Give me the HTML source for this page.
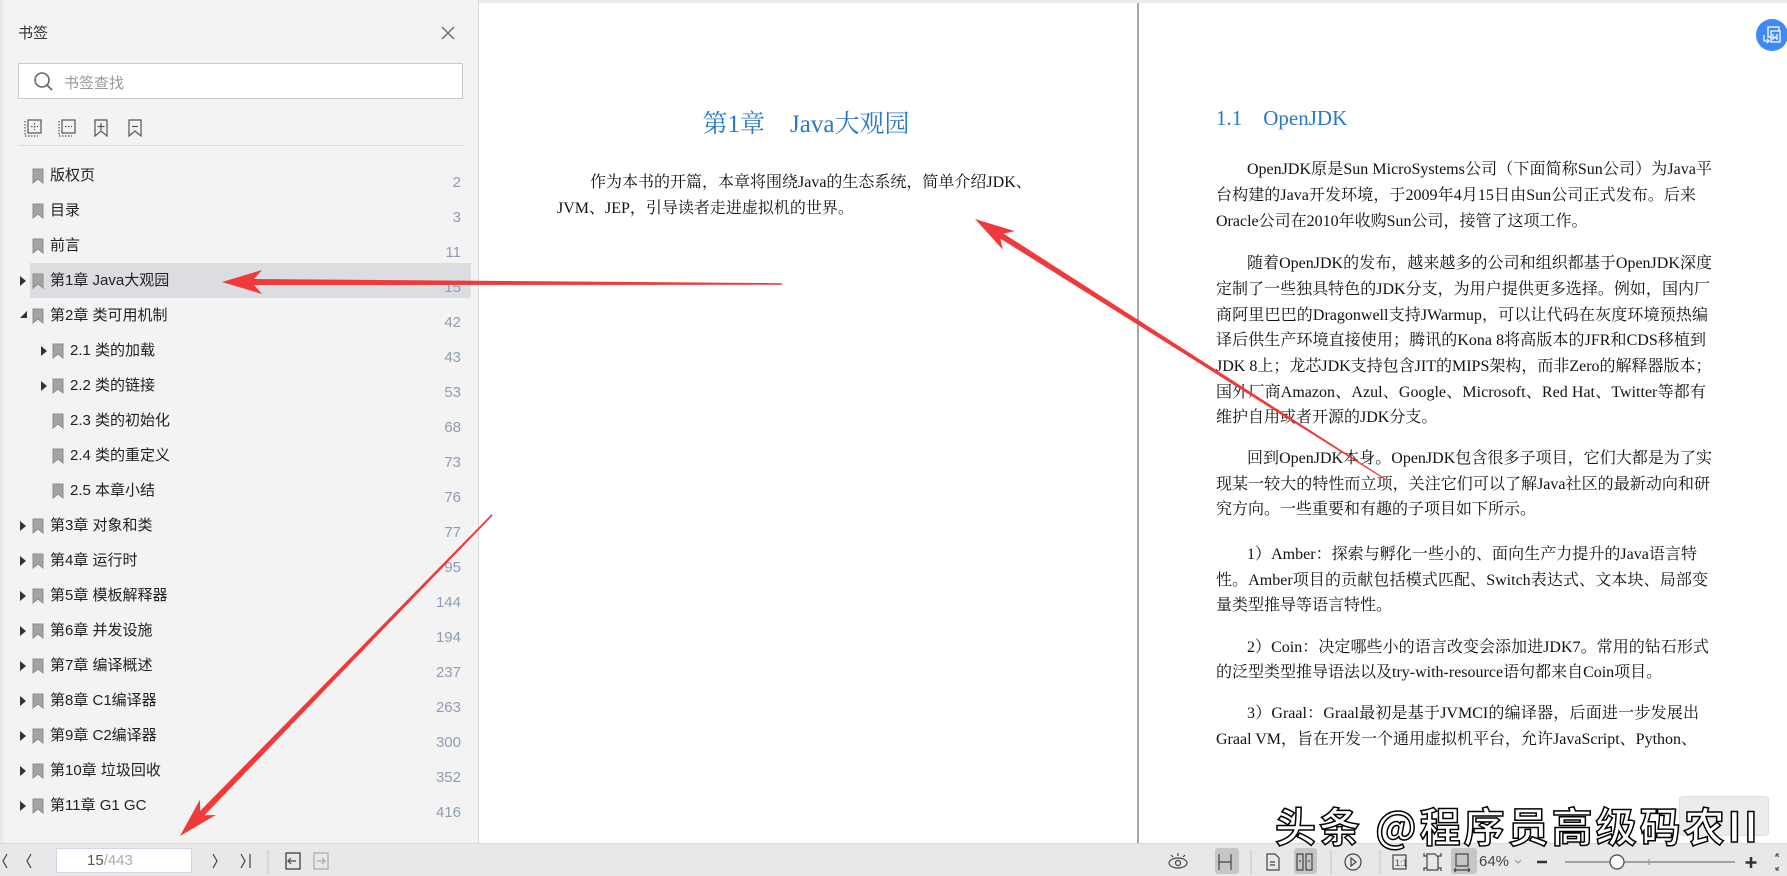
<!DOCTYPE html>
<html><head><meta charset="utf-8"><style>
*{margin:0;padding:0;box-sizing:border-box}
body{width:1787px;height:876px;overflow:hidden;background:#fff;position:relative;font-family:"Liberation Sans","Noto Sans CJK SC",sans-serif}
.abs{position:absolute}
#side{left:0;top:0;width:479px;height:843px;background:#f3f3f3;border-right:1px solid #d6d6d6;border-left:3px solid #e9e9e9}
.row{position:absolute;left:0;width:475px;height:35px;font-size:15px;color:#222;line-height:35px}
.row .t{position:absolute;top:1px}
.row .n{position:absolute;right:14px;top:8px;color:#8d9db3;font-size:15px;font-family:"Liberation Sans",sans-serif}
.row svg.bm{position:absolute;top:11px}
.tri{position:absolute;top:14px;width:0;height:0;border-top:5px solid transparent;border-bottom:5px solid transparent;border-left:6px solid #333}
.pg{font-family:"Liberation Serif","Noto Serif CJK SC",serif;font-size:16px;color:#111;position:absolute;white-space:nowrap}
.j{text-align:justify;text-align-last:justify}
#tb{left:0;top:843px;width:1787px;height:33px;background:#e8e8e8;border-top:1px solid #d8d8d8}
</style></head><body>
<div class="abs" style="left:0;top:0;width:1787px;height:3px;background:#ececec"></div>
<div id="side" class="abs"></div>
<div class="abs" style="left:18px;top:22px;font-size:15px;color:#333">书签</div>
<svg class="abs" style="left:440px;top:25px" width="16" height="16"><path d="M2 2L14 14M14 2L2 14" stroke="#666" stroke-width="1.3"/></svg>
<div class="abs" style="left:18px;top:63px;width:445px;height:36px;background:#fff;border:1px solid #c9c9c9"></div>
<svg class="abs" style="left:33px;top:71px" width="22" height="22"><circle cx="9" cy="9" r="7" fill="none" stroke="#666" stroke-width="1.6"/><path d="M14 14L19 19" stroke="#666" stroke-width="1.8"/></svg>
<div class="abs" style="left:64px;top:72px;font-size:15px;color:#999">书签查找</div>
<svg class="abs" style="left:24px;top:118px" width="140" height="20" fill="none" stroke="#555" stroke-width="1.2">
<rect x="4" y="2" width="13" height="13"/><path d="M10.5 5v7M7 8.5h7M1 3v15h13" stroke-dasharray="1.5 1.5"/>
<rect x="38" y="2" width="13" height="13"/><path d="M41 8.5h7M35 3v15h13" stroke-dasharray="1.5 1.5"/>
<path d="M71 2h12v16l-6-5-6 5z"/><path d="M77 5v7M73.5 8.5h7"/>
<path d="M105 2h12v16l-6-5-6 5z"/><path d="M108 8.5h6"/>
</svg>
<div class="abs" style="left:18px;top:145px;width:445px;height:1px;background:#dcdcdc"></div>
<div class="abs" style="left:30px;top:263px;width:441px;height:35px;background:#dcdde0"></div>

<div class="row" style="top:157px"><svg class="bm" style="left:32px" width="12" height="16"><path d="M1 1H11V15L6 11L1 15Z" fill="#a3a3a3" stroke="#8c8c8c"/></svg><span class="t" style="left:50px">版权页</span><span class="n">2</span></div>
<div class="row" style="top:192px"><svg class="bm" style="left:32px" width="12" height="16"><path d="M1 1H11V15L6 11L1 15Z" fill="#a3a3a3" stroke="#8c8c8c"/></svg><span class="t" style="left:50px">目录</span><span class="n">3</span></div>
<div class="row" style="top:227px"><svg class="bm" style="left:32px" width="12" height="16"><path d="M1 1H11V15L6 11L1 15Z" fill="#a3a3a3" stroke="#8c8c8c"/></svg><span class="t" style="left:50px">前言</span><span class="n">11</span></div>
<div class="row" style="top:262px"><div class="tri" style="left:20px"></div><svg class="bm" style="left:32px" width="12" height="16"><path d="M1 1H11V15L6 11L1 15Z" fill="#a3a3a3" stroke="#8c8c8c"/></svg><span class="t" style="left:50px">第1章 Java大观园</span><span class="n">15</span></div>
<div class="row" style="top:297px"><div class="abs" style="left:20px;top:14px;width:0;height:0;border-left:7px solid transparent;border-bottom:7px solid #333"></div><svg class="bm" style="left:32px" width="12" height="16"><path d="M1 1H11V15L6 11L1 15Z" fill="#a3a3a3" stroke="#8c8c8c"/></svg><span class="t" style="left:50px">第2章 类可用机制</span><span class="n">42</span></div>
<div class="row" style="top:332px"><div class="tri" style="left:41px"></div><svg class="bm" style="left:52px" width="12" height="16"><path d="M1 1H11V15L6 11L1 15Z" fill="#a3a3a3" stroke="#8c8c8c"/></svg><span class="t" style="left:70px">2.1 类的加载</span><span class="n">43</span></div>
<div class="row" style="top:367px"><div class="tri" style="left:41px"></div><svg class="bm" style="left:52px" width="12" height="16"><path d="M1 1H11V15L6 11L1 15Z" fill="#a3a3a3" stroke="#8c8c8c"/></svg><span class="t" style="left:70px">2.2 类的链接</span><span class="n">53</span></div>
<div class="row" style="top:402px"><svg class="bm" style="left:52px" width="12" height="16"><path d="M1 1H11V15L6 11L1 15Z" fill="#a3a3a3" stroke="#8c8c8c"/></svg><span class="t" style="left:70px">2.3 类的初始化</span><span class="n">68</span></div>
<div class="row" style="top:437px"><svg class="bm" style="left:52px" width="12" height="16"><path d="M1 1H11V15L6 11L1 15Z" fill="#a3a3a3" stroke="#8c8c8c"/></svg><span class="t" style="left:70px">2.4 类的重定义</span><span class="n">73</span></div>
<div class="row" style="top:472px"><svg class="bm" style="left:52px" width="12" height="16"><path d="M1 1H11V15L6 11L1 15Z" fill="#a3a3a3" stroke="#8c8c8c"/></svg><span class="t" style="left:70px">2.5 本章小结</span><span class="n">76</span></div>
<div class="row" style="top:507px"><div class="tri" style="left:20px"></div><svg class="bm" style="left:32px" width="12" height="16"><path d="M1 1H11V15L6 11L1 15Z" fill="#a3a3a3" stroke="#8c8c8c"/></svg><span class="t" style="left:50px">第3章 对象和类</span><span class="n">77</span></div>
<div class="row" style="top:542px"><div class="tri" style="left:20px"></div><svg class="bm" style="left:32px" width="12" height="16"><path d="M1 1H11V15L6 11L1 15Z" fill="#a3a3a3" stroke="#8c8c8c"/></svg><span class="t" style="left:50px">第4章 运行时</span><span class="n">95</span></div>
<div class="row" style="top:577px"><div class="tri" style="left:20px"></div><svg class="bm" style="left:32px" width="12" height="16"><path d="M1 1H11V15L6 11L1 15Z" fill="#a3a3a3" stroke="#8c8c8c"/></svg><span class="t" style="left:50px">第5章 模板解释器</span><span class="n">144</span></div>
<div class="row" style="top:612px"><div class="tri" style="left:20px"></div><svg class="bm" style="left:32px" width="12" height="16"><path d="M1 1H11V15L6 11L1 15Z" fill="#a3a3a3" stroke="#8c8c8c"/></svg><span class="t" style="left:50px">第6章 并发设施</span><span class="n">194</span></div>
<div class="row" style="top:647px"><div class="tri" style="left:20px"></div><svg class="bm" style="left:32px" width="12" height="16"><path d="M1 1H11V15L6 11L1 15Z" fill="#a3a3a3" stroke="#8c8c8c"/></svg><span class="t" style="left:50px">第7章 编译概述</span><span class="n">237</span></div>
<div class="row" style="top:682px"><div class="tri" style="left:20px"></div><svg class="bm" style="left:32px" width="12" height="16"><path d="M1 1H11V15L6 11L1 15Z" fill="#a3a3a3" stroke="#8c8c8c"/></svg><span class="t" style="left:50px">第8章 C1编译器</span><span class="n">263</span></div>
<div class="row" style="top:717px"><div class="tri" style="left:20px"></div><svg class="bm" style="left:32px" width="12" height="16"><path d="M1 1H11V15L6 11L1 15Z" fill="#a3a3a3" stroke="#8c8c8c"/></svg><span class="t" style="left:50px">第9章 C2编译器</span><span class="n">300</span></div>
<div class="row" style="top:752px"><div class="tri" style="left:20px"></div><svg class="bm" style="left:32px" width="12" height="16"><path d="M1 1H11V15L6 11L1 15Z" fill="#a3a3a3" stroke="#8c8c8c"/></svg><span class="t" style="left:50px">第10章 垃圾回收</span><span class="n">352</span></div>
<div class="row" style="top:787px"><div class="tri" style="left:20px"></div><svg class="bm" style="left:32px" width="12" height="16"><path d="M1 1H11V15L6 11L1 15Z" fill="#a3a3a3" stroke="#8c8c8c"/></svg><span class="t" style="left:50px">第11章 G1 GC</span><span class="n">416</span></div>

<div class="abs" style="left:1137px;top:3px;width:2px;height:840px;background:#a8a8a8"></div>

<div class="pg" style="left:596px;top:104px;width:420px;text-align:center;font-size:25px;color:#2a78c8">第1章　Java大观园</div>
<div class="pg j" style="left:590px;top:169px;width:438px">作为本书的开篇，本章将围绕Java的生态系统，简单介绍JDK、</div>
<div class="pg" style="left:557px;top:195px">JVM、JEP，引导读者走进虚拟机的世界。</div>

<div class="pg" style="left:1216px;top:102px;font-size:21px;color:#2a78c8">1.1　OpenJDK</div>
<div class="pg j" style="left:1247px;top:156px;width:465px">OpenJDK原是Sun MicroSystems公司（下面简称Sun公司）为Java平</div>
<div class="pg j" style="left:1216px;top:182px;width:480px">台构建的Java开发环境，于2009年4月15日由Sun公司正式发布。后来</div>
<div class="pg" style="left:1216px;top:208px">Oracle公司在2010年收购Sun公司，接管了这项工作。</div>

<div class="pg j" style="left:1247px;top:250px;width:465px">随着OpenJDK的发布，越来越多的公司和组织都基于OpenJDK深度</div>
<div class="pg j" style="left:1216px;top:276px;width:494px">定制了一些独具特色的JDK分支，为用户提供更多选择。例如，国内厂</div>
<div class="pg j" style="left:1216px;top:302px;width:492px">商阿里巴巴的Dragonwell支持JWarmup，可以让代码在灰度环境预热编</div>
<div class="pg j" style="left:1216px;top:327px;width:490px">译后供生产环境直接使用；腾讯的Kona 8将高版本的JFR和CDS移植到</div>
<div class="pg j" style="left:1216px;top:353px;width:490px">JDK 8上；龙芯JDK支持包含JIT的MIPS架构，而非Zero的解释器版本；</div>
<div class="pg j" style="left:1216px;top:379px;width:490px">国外厂商Amazon、Azul、Google、Microsoft、Red Hat、Twitter等都有</div>
<div class="pg" style="left:1216px;top:404px">维护自用或者开源的JDK分支。</div>

<div class="pg j" style="left:1247px;top:445px;width:465px">回到OpenJDK本身。OpenJDK包含很多子项目，它们大都是为了实</div>
<div class="pg j" style="left:1216px;top:471px;width:494px">现某一较大的特性而立项，关注它们可以了解Java社区的最新动向和研</div>
<div class="pg" style="left:1216px;top:496px">究方向。一些重要和有趣的子项目如下所示。</div>

<div class="pg j" style="left:1247px;top:541px;width:450px">1）Amber：探索与孵化一些小的、面向生产力提升的Java语言特</div>
<div class="pg j" style="left:1216px;top:567px;width:492px">性。Amber项目的贡献包括模式匹配、Switch表达式、文本块、局部变</div>
<div class="pg" style="left:1216px;top:592px">量类型推导等语言特性。</div>

<div class="pg j" style="left:1247px;top:634px;width:462px">2）Coin：决定哪些小的语言改变会添加进JDK7。常用的钻石形式</div>
<div class="pg" style="left:1216px;top:659px">的泛型类型推导语法以及try-with-resource语句都来自Coin项目。</div>

<div class="pg j" style="left:1247px;top:700px;width:452px">3）Graal：Graal最初是基于JVMCI的编译器，后面进一步发展出</div>
<div class="pg" style="left:1216px;top:726px">Graal VM，旨在开发一个通用虚拟机平台，允许JavaScript、Python、</div>

<div class="abs" style="left:1756px;top:19px;width:32px;height:32px;border-radius:50%;background:#3d8af7"></div>
<svg class="abs" style="left:1762px;top:26px" width="20" height="18" fill="none" stroke="#fff" stroke-width="1.3"><rect x="6" y="1" width="11" height="10"/><rect x="9" y="5" width="9" height="11" fill="#3d8af7"/><path d="M11 8v5l2-2 2 2V8M2 9v6h5M5 13l2 2-2 2"/></svg>

<div class="abs" style="left:1679px;top:796px;width:90px;height:40px;background:#ececec;border-radius:4px;border:1px solid #dedede"></div>

<div id="tb" class="abs"></div>
<svg class="abs" style="left:0;top:848px" width="330" height="26" fill="none" stroke="#444" stroke-width="1.2">
<path d="M7 6l-4 7 4 7M31 6l-4 7 4 7M213 6l4 7-4 7M241 6l4 7-4 7M250 6v14"/>
<path d="M268 2v24" stroke="#ccc"/>
<rect x="286" y="5" width="14" height="16" stroke="#333"/><path d="M296 13h-7M291 10l-3 3 3 3"/>
<rect x="314" y="5" width="14" height="16" stroke="#aaa"/><path d="M317 13h7M322 10l3 3-3 3" stroke="#aaa"/>
</svg>
<div class="abs" style="left:56px;top:848px;width:136px;height:25px;background:#fff;border:1px solid #cfd8e6;font-size:15px;line-height:23px;padding-left:30px;color:#555">15<span style="color:#aaa">/443</span></div>

<div class="abs" style="left:1215px;top:848px;width:24px;height:26px;background:#c6c6c6;border-radius:3px"></div>
<div class="abs" style="left:1294px;top:848px;width:23px;height:26px;background:#c6c6c6;border-radius:3px"></div>
<div class="abs" style="left:1451px;top:848px;width:26px;height:26px;background:#c6c6c6;border-radius:3px"></div>
<svg class="abs" style="left:1165px;top:848px" width="622" height="28" fill="none" stroke="#444" stroke-width="1.2">
<ellipse cx="13" cy="15" rx="9" ry="5"/><circle cx="13" cy="15" r="2.5"/><path d="M13 5v3M6 7l2 2M20 7l-2 2"/>
<path d="M54 6v16M66 6v16M54 14h12"/>
<path d="M86 2v24M166 2v24M215 2v24" stroke="#ccc"/>
<path d="M102 6h8l4 4v12h-12zM105 14h5M105 17h5"/>
<path d="M132 6h6v16h-6zM141 6h6v16h-6zM135 12v2M144 12v2"/>
<circle cx="188" cy="14" r="8"/><path d="M186 10l5 4-5 4z"/>
<rect x="228" y="7" width="13" height="14"/><text x="230" y="18" font-size="9" fill="#444" stroke="none" font-family="Liberation Sans">1:1</text>
<path d="M262 6h8l3 3v13h-11z"/><path d="M259 5v3h3M276 5v3h-3M259 23v-3h3M276 23v-3h-3"/>
<path d="M291 6h12v12h-12zM289 22h16M289 22l2-2M289 22l2 2M305 22l-2-2M305 22l-2 2"/>
<path d="M350 12l3 3 3-3" stroke="#999"/>
<path d="M372 14h10" stroke-width="2.5" stroke="#333"/>
<path d="M400 14h170" stroke="#777"/><path d="M484 11v6" stroke="#999"/>
<circle cx="452" cy="14" r="7" fill="#fff"/>
<path d="M586 9v11M580.5 14.5h11" stroke-width="2.5" stroke="#333"/>
<path d="M611 6l3 3M611 6h3M611 6v3M611 22l3-3M611 22h3M611 22v-3" stroke-width="1"/>
</svg>
<div class="abs" style="left:1479px;top:853px;font-size:15px;color:#444">64%</div>

<div class="abs" style="left:1275px;top:800px;font-size:41px;line-height:48px;color:#fff;font-family:'Noto Sans CJK SC',sans-serif;font-weight:bold;white-space:nowrap;-webkit-text-stroke:1.5px #000;letter-spacing:3px">头条 @程序员高级码农II</div>

<svg class="abs" style="left:0;top:0" width="1787" height="876">
<g fill="#f0393a">
<polygon points="222,282 262,270 254,279 782,283.2 782,284.8 254,285 262,294"/>
<polygon points="975,219 1014.7,231.1 1003.6,233.6 1385.3,478.5 1384.7,479.5 1000.4,238.6 1002.9,249.7"/>
<polygon points="180,836 215.8,815 204.5,815.2 492.6,515.6 491.4,514.4 200.1,811 200,799.6"/>
</g>
</svg>
</body></html>
